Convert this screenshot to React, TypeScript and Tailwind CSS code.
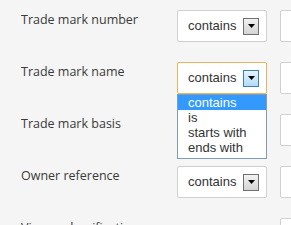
import React from 'react';

const options = ['contains', 'is', 'starts with', 'ends with'];

const rows = [
  { label: 'Trade mark number', select: true },
  { label: 'Trade mark name', select: true, open: true },
  { label: 'Trade mark basis', select: false },
  { label: 'Owner reference', select: true },
  { label: 'Vienna classification', select: false },
];

const Arrow: React.FC<{ focused?: boolean }> = ({ focused }) => (
  <span
    className={`flex h-[17px] w-[16px] items-center justify-center border ${
      focused
        ? 'border-[#3c7fb1] bg-gradient-to-b from-[#e5f4fc] to-[#b3dcf5]'
        : 'border-[#707070] bg-gradient-to-b from-[#f2f2f2] to-[#d4d4d4]'
    }`}
  >
    <svg width="7" height="4" viewBox="0 0 7 4">
      <path d="M0 0h7L3.5 4z" fill="#000" />
    </svg>
  </span>
);

const SelectBox: React.FC<{ open?: boolean }> = ({ open }) => (
  <div className="relative">
    <div
      className={`flex h-[32px] w-[90px] items-center justify-between rounded-[2px] border bg-white pl-[10px] pr-[7px] text-[13px] text-[#333] ${
        open ? 'border-[#e5b55c]' : 'border-[#d0d0d0]'
      }`}
      style={{ fontFamily: '"Liberation Sans", Arial, sans-serif' }}
    >
      <span>contains</span>
      <Arrow focused={open} />
    </div>
    {open && (
      <ul
        className="absolute left-0 top-[32px] z-10 w-[90px] border border-[#7f9db9] bg-white pb-[3px] text-[13px] text-[#333]"
        style={{ fontFamily: '"Liberation Sans", Arial, sans-serif' }}
      >
        {options.map((o, i) => (
          <li
            key={o}
            className={`h-[15px] pl-[10px] leading-[15px] ${i === 0 ? 'bg-[#3399ff] text-white' : ''}`}
          >
            {o}
          </li>
        ))}
      </ul>
    )}
  </div>
);

export default function App() {
  return (
    <div
      className="h-[225px] w-[291px] overflow-hidden bg-[#f5f5f5] pt-[10px]"
      style={{ fontFamily: '"Open Sans", sans-serif' }}
    >
      <div className="flex flex-col gap-[20px]">
        {rows.map((r) => (
          <div key={r.label} className="flex h-[32px] items-start">
            <div className="w-[177px] shrink-0 pl-[21px] pt-[1px] text-[12.5px] leading-[17px] text-[#3a3a3a]">
              {r.label}
            </div>
            <div className="w-[103px] shrink-0">{r.select && <SelectBox open={r.open} />}</div>
            <div className="h-[32px] w-[120px] shrink-0 rounded-[2px] border border-[#d0d0d0] bg-white" />
          </div>
        ))}
      </div>
    </div>
  );
}
